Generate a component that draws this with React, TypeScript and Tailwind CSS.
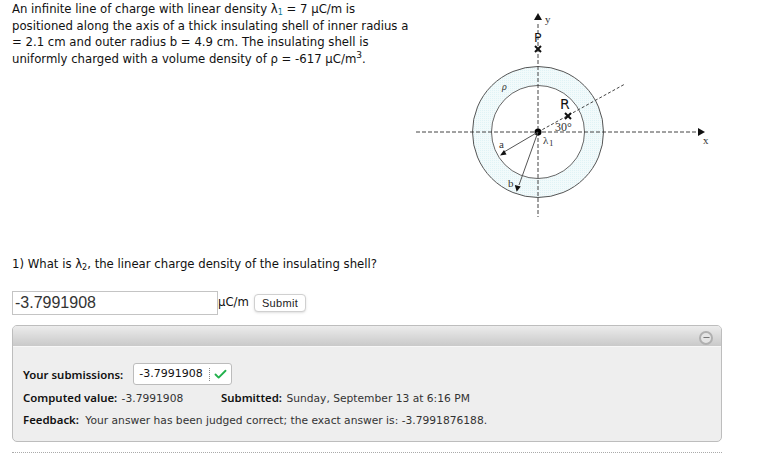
import { Check, Minus } from 'lucide-react'

function Diagram() {
  const cx = 138
  const cy = 132
  return (
    <svg width="320" height="230" viewBox="0 0 320 230" className="shrink-0">
      <defs>
        <pattern id="dots" width="2" height="2" patternUnits="userSpaceOnUse">
          <rect width="2" height="2" fill="#f2fafb" />
          <rect width="1" height="1" fill="#e0f3f6" />
        </pattern>
      </defs>
      <circle cx={cx} cy={cy} r="65.5" fill="url(#dots)" stroke="#555" strokeWidth="1" />
      <circle cx={cx} cy={cy} r="46.5" fill="#fff" stroke="#666" strokeWidth="1" />
      <g stroke="#444" strokeWidth="1" strokeDasharray="4 2" fill="none">
        <line x1="16" y1="132" x2="298" y2="132" />
        <line x1={cx} y1="24" x2={cx} y2="217" />
        <line x1={cx} y1="132" x2="225" y2="84" strokeDasharray="3 2" />
      </g>
      <polygon points="298,128 298,136 305,132" fill="#111" />
      <polygon points="134,20 142,20 138,13" fill="#111" />
      <circle cx={cx} cy={cy} r="3.5" fill="#000" />
      <line x1={cx} y1={cy} x2="104" y2="152" stroke="#555" />
      <polygon points="100,155.5 104,150 106.5,154.5" fill="#111" />
      <line x1={cx} y1={cy} x2="119" y2="185" stroke="#555" />
      <polygon points="116.7,191.7 114.8,185 120.8,186.5" fill="#111" />
      <g stroke="#111" strokeWidth="2">
        <line x1="135" y1="46" x2="141" y2="52" />
        <line x1="141" y1="46" x2="135" y2="52" />
        <line x1="165" y1="113" x2="171" y2="119" />
        <line x1="171" y1="113" x2="165" y2="119" />
      </g>
      <g fontFamily="'Liberation Serif', serif" fontSize="11" fill="#333">
        <text x="145" y="23">y</text>
        <text x="303" y="144">x</text>
        <text x="99" y="148">a</text>
        <text x="108" y="187">b</text>
        <text x="102" y="90" fontSize="10" fontStyle="italic">ρ</text>
        <text x="155" y="131" fontSize="12">30°</text>
        <text x="143" y="144" fontSize="11">λ</text>
        <text x="149" y="146" fontSize="9">1</text>
      </g>
      <g fontFamily="'DejaVu Sans', sans-serif" fill="#111">
        <text x="134" y="41.5" fontSize="12.5">P</text>
        <text x="160" y="109" fontSize="14">R</text>
      </g>
    </svg>
  )
}

export default function App() {
  return (
    <div className="h-[463px] w-[760px] overflow-hidden bg-white font-['DejaVu_Sans',sans-serif] text-[10.7px] text-[#111]">
      <div className="flex items-start pl-3">
        <p className="w-[398px] shrink-0 pt-[1px] text-[11.7px] leading-[16.5px]">
          An infinite line of charge with linear density λ<sub className="text-[8px] text-[#0a7a9a]">1</sub> = 7 μC/m is
          positioned along the axis of a thick insulating shell of inner radius a = 2.1 cm and outer radius b = 4.9 cm.
          The insulating shell is uniformly charged with a volume density of ρ = -617 μC/m<sup className="text-[9px]">3</sup>.
        </p>
        <div className="-ml-[10px]">
          <Diagram />
        </div>
      </div>

      <p className="mt-[26px] pl-3 text-[11.7px] leading-[17px]">
        1) What is λ<sub className="text-[8px]">2</sub>, the linear charge density of the insulating shell?
      </p>

      <div className="mt-[18px] flex items-center pl-3">
        <div className="flex h-[24px] w-[206px] items-center border border-[#c4c4c4] pl-[2px] font-['Liberation_Sans',sans-serif] text-[16px] text-[#333]">
          -3.7991908
        </div>
        <span className="text-[11.7px]">μC/m</span>
        <button className="ml-[5px] h-[18px] rounded-[4px] border border-[#d0d0d0] bg-white px-[7px] font-['Liberation_Sans',sans-serif] text-[11px] leading-none tracking-[0.35px] text-[#222] shadow-sm">
          Submit
        </button>
      </div>

      <div className="ml-3 mt-[10px] h-[117px] w-[710px] overflow-hidden rounded-[5px] border border-[#bdbdbd] bg-[#eeeeee]">
        <div className="flex h-[21px] items-center justify-end border-b border-[#f7f7f7] bg-gradient-to-b from-[#ececec] to-[#c9c9c9] pr-[8px]">
          <div className="mt-[3px] flex h-[14px] w-[14px] items-center justify-center rounded-full border-2 border-[#b0b0b0] bg-[#e4e4e4]">
            <Minus size={9} strokeWidth={3} className="text-[#777]" />
          </div>
        </div>
        <div className="px-[10px] pt-[16px] leading-[16px]">
          <div className="flex items-center">
            <b className="mt-[2px] font-['Noto_Sans',sans-serif] text-[11.4px] font-semibold">Your submissions:</b>
            <div className="ml-[10px] flex h-[22px] items-center rounded-[3px] border border-[#bcbcbc] bg-white pl-[5px] pr-[3px] text-[11px]">
              -3.7991908
              <span className="ml-[6px] h-[13px] border-l border-dotted border-[#888]" />
              <Check size={15} strokeWidth={3} className="ml-[3px] text-[#22b14c]" />
            </div>
          </div>
          <div className="mt-[5px] flex">
            <span className="w-[198px]">
              <b className="font-['Noto_Sans',sans-serif] text-[11.4px] font-semibold">Computed value:</b>{' '}
              <span className="ml-[1px] text-[#333]">-3.7991908</span>
            </span>
            <span>
              <b className="font-['Noto_Sans',sans-serif] text-[11.4px] font-semibold">Submitted:</b>{' '}
              <span className="ml-[1px] text-[#333]">Sunday, September 13 at 6:16 PM</span>
            </span>
          </div>
          <div className="mt-[5px]">
            <b className="font-['Noto_Sans',sans-serif] text-[11.4px] font-semibold">Feedback:</b>{' '}
            <span className="ml-[3px] text-[#333]">Your answer has been judged correct; the exact answer is: -3.7991876188.</span>
          </div>
        </div>
      </div>

      <div className="ml-3 mt-[10px] w-[710px] border-t border-dotted border-[#aaaaaa]" />
    </div>
  )
}
